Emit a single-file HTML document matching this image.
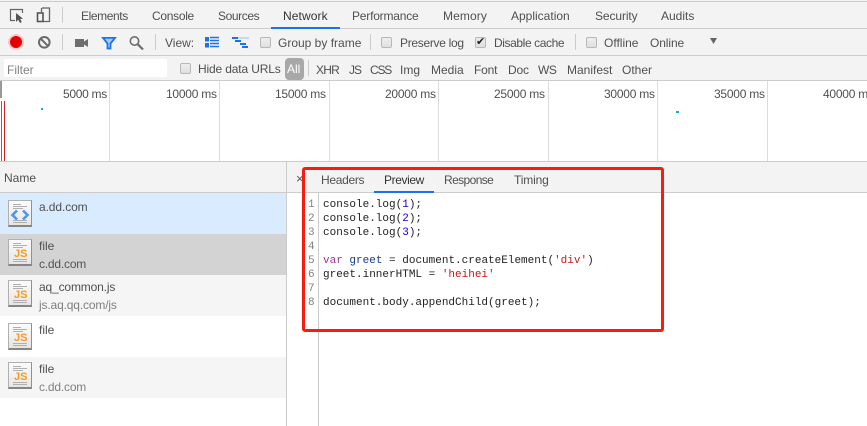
<!DOCTYPE html>
<html><head><meta charset="utf-8"><style>
html,body{margin:0;padding:0;background:#fff}
#r{position:relative;width:867px;height:426px;overflow:hidden;font:12px "Liberation Sans",sans-serif;color:#505050;background:#fff}
#r div,#r span.t{position:absolute}
.t{white-space:nowrap;line-height:14px}
.b{background:#ccc}
.cb{width:9px;height:9px;border:1px solid #b8b8b8;border-radius:2px;background:linear-gradient(#eee,#e0e0e0)}
.fi{width:24px;height:27px;background:linear-gradient(#fbfbfb,#e6e6e6);border:1px solid #b0b0b0;border-right-color:#909090;border-bottom:2px solid #858585;box-sizing:border-box}
.fi i{position:absolute;height:1px;background:#b0b0b0}
.js{position:absolute;left:5px;top:9px;font:bold 11px/11px "Liberation Sans",sans-serif;color:#f59c20}
.m{font:11px/14px "Liberation Mono",monospace;color:#222;white-space:pre}
.n{position:absolute;left:308px;color:#808080;font:11px/14px "Liberation Mono",monospace}
.v{color:#a0309a}
.g{background:#dcdcdc;width:1px;height:80px;top:81px}
</style></head><body><div id="r">
<div style="left:0;top:0;width:867px;height:162px;background:#f3f3f3"></div>
<div class="b" style="left:0;top:1px;width:867px;height:1px"></div>
<div class="b" style="left:0;top:28px;width:867px;height:1px"></div>
<div class="b" style="left:0;top:55px;width:867px;height:1px"></div>
<div class="b" style="left:0;top:80px;width:867px;height:1px"></div>
<div style="left:271px;top:27px;width:69px;height:2px;background:#1a73e8"></div>

<svg style="position:absolute;left:0;top:0" width="260" height="56" fill="none">
<path d="M15 20.500H10.500V9.500H22.500V13" stroke="#666" stroke-width="1.200"/>
<path d="M16 13V22L18.200 19.800L20 23L21.800 22L20.200 19L23 18.800Z" fill="#555"/>
<path d="M43 8H49.500V21.500H43" stroke="#666" stroke-width="1.300"/><path d="M42 8H44" stroke="#666" stroke-width="1.300"/><path d="M41.500 12V8" stroke="#666" stroke-width="1.300"/>
<rect x="37.500" y="13" width="5.500" height="8.500" stroke="#555" stroke-width="1.600"/>
<circle cx="16" cy="42" r="8" fill="#f7caca"/><circle cx="16" cy="42" r="6" fill="#e60000"/>
<circle cx="44.300" cy="42.300" r="5.300" stroke="#6a6a6a" stroke-width="2"/><path d="M40.500 38.500L48.100 46.100" stroke="#6a6a6a" stroke-width="2"/>
<rect x="75" y="39" width="9" height="8" fill="#6e6e6e"/><path d="M84 41.500L88 39V47L84 44.500Z" fill="#6e6e6e"/>
<path d="M103 37.900H115L110.500 43.500V48.500H107.500V43.500Z" fill="#a8cdf6" stroke="#1a73e8" stroke-width="1.800"/>
<circle cx="134.500" cy="41" r="4.200" stroke="#6e6e6e" stroke-width="1.600"/><path d="M137.800 44.300L143 49.500" stroke="#6e6e6e" stroke-width="2.200"/>
<rect x="205" y="37" width="4" height="4.500" fill="#1a73e8"/><rect x="205" y="43" width="4" height="4.500" fill="#1a73e8"/>
<path d="M210 37.500H219M210 40.500H219M210 43.500H219M210 46.500H219" stroke="#1a73e8" stroke-width="1.400"/>
<rect x="232" y="37" width="6" height="2" fill="#1a73e8"/><rect x="238" y="37" width="11" height="2" fill="#c3d9f4"/>
<rect x="235" y="40" width="6" height="2" fill="#1a73e8"/><rect x="240" y="43" width="6" height="2" fill="#1a73e8"/><rect x="242" y="46" width="6" height="2" fill="#1a73e8"/>
</svg>
<div class="b" style="left:62px;top:7px;width:1px;height:16px"></div>
<div class="b" style="left:62px;top:34px;width:1px;height:16px"></div>
<div class="b" style="left:155px;top:34px;width:1px;height:16px"></div>
<div class="b" style="left:370px;top:34px;width:1px;height:16px"></div>
<div class="b" style="left:575px;top:34px;width:1px;height:16px"></div>
<div class="b" style="left:308px;top:60px;width:1px;height:16px"></div>

<span class="t" style="left:81px;top:9px;letter-spacing:-.4px">Elements</span>
<span class="t" style="left:152px;top:9px;letter-spacing:-.3px">Console</span>
<span class="t" style="left:218px;top:9px;letter-spacing:-.4px">Sources</span>
<span class="t" style="left:283px;top:9px;color:#333;letter-spacing:.1px">Network</span>
<span class="t" style="left:352px;top:9px;letter-spacing:-.2px">Performance</span>
<span class="t" style="left:443px;top:9px;letter-spacing:.1px">Memory</span>
<span class="t" style="left:511px;top:9px">Application</span>
<span class="t" style="left:595px;top:9px;letter-spacing:-.1px">Security</span>
<span class="t" style="left:661px;top:9px">Audits</span>

<span class="t" style="left:165px;top:36px">View:</span>
<div class="cb" style="left:260px;top:37px"></div><span class="t" style="left:278px;top:36px">Group by frame</span>
<div class="cb" style="left:381px;top:37px"></div><span class="t" style="left:400px;top:36px;letter-spacing:-.3px">Preserve log</span>
<div class="cb" style="left:475px;top:37px"></div><span class="t" style="left:476px;top:35px;font-size:11px;color:#222">✔</span><span class="t" style="left:494px;top:36px;letter-spacing:-.4px">Disable cache</span>
<div class="cb" style="left:586px;top:37px"></div><span class="t" style="left:604px;top:36px">Offline</span>
<span class="t" style="left:650px;top:36px;letter-spacing:-.1px">Online</span>
<svg style="position:absolute;left:710px;top:38px" width="7" height="6"><path d="M0 0H7L3.500 6Z" fill="#666"/></svg>

<div style="left:4px;top:59px;width:163px;height:18px;background:#fff"></div>
<span class="t" style="left:7px;top:63px;color:#808080">Filter</span>
<div class="cb" style="left:180px;top:63px"></div><span class="t" style="left:198px;top:62px;letter-spacing:-.15px">Hide data URLs</span>
<div style="left:285px;top:58px;width:19px;height:22px;border-radius:4px;background:#a8a8a8"></div>
<span class="t" style="left:287px;top:62px;color:#fff">All</span>
<span class="t" style="left:316px;top:63px;letter-spacing:-.8px">XHR</span>
<span class="t" style="left:349px;top:63px;letter-spacing:-1px">JS</span>
<span class="t" style="left:370px;top:63px;letter-spacing:-1.200px">CSS</span>
<span class="t" style="left:400px;top:63px">Img</span>
<span class="t" style="left:431px;top:63px">Media</span>
<span class="t" style="left:474px;top:63px;letter-spacing:-.2px">Font</span>
<span class="t" style="left:508px;top:63px;letter-spacing:-.2px">Doc</span>
<span class="t" style="left:538px;top:63px;letter-spacing:-.4px">WS</span>
<span class="t" style="left:567px;top:63px">Manifest</span>
<span class="t" style="left:622px;top:63px">Other</span>

<div style="left:0;top:81px;width:867px;height:80px;background:#fff"></div>
<div class="b" style="left:0;top:161px;width:867px;height:1px"></div>
<div class="g" style="left:109px"></div>
<div class="g" style="left:219px"></div>
<div class="g" style="left:329px"></div>
<div class="g" style="left:438px"></div>
<div class="g" style="left:548px"></div>
<div class="g" style="left:657px"></div>
<div class="g" style="left:767px"></div>
<div style="left:0;top:81px;width:2px;height:17px;background:#999"></div>
<div style="left:1px;top:101px;width:1px;height:60px;background:#3b78c8"></div>
<div style="left:4px;top:101px;width:1px;height:60px;background:#d02020"></div>
<div style="left:41px;top:108px;width:2px;height:2px;background:#12a5e8"></div>
<div style="left:676px;top:111px;width:3px;height:2px;background:#12a5e8"></div>
<span class="t" style="left:63px;top:87px;letter-spacing:-.3px">5000 ms</span>
<span class="t" style="left:166px;top:87px;letter-spacing:-.25px">10000 ms</span>
<span class="t" style="left:275px;top:87px;letter-spacing:-.25px">15000 ms</span>
<span class="t" style="left:385px;top:87px;letter-spacing:-.25px">20000 ms</span>
<span class="t" style="left:494px;top:87px;letter-spacing:-.25px">25000 ms</span>
<span class="t" style="left:604px;top:87px;letter-spacing:-.25px">30000 ms</span>
<span class="t" style="left:714px;top:87px;letter-spacing:-.25px">35000 ms</span>
<span class="t" style="left:823px;top:87px;letter-spacing:-.25px">40000 ms</span>

<div style="left:0;top:162px;width:287px;height:31px;background:#f3f3f3"></div>
<div class="b" style="left:0;top:192px;width:867px;height:1px"></div>
<div style="left:287px;top:162px;width:580px;height:30px;background:#f3f3f3"></div>
<span class="t" style="left:4px;top:171px">Name</span>

<div style="left:0;top:193px;width:286px;height:41px;background:#d9ecff"></div>
<div style="left:0;top:234px;width:286px;height:41px;background:#d3d3d3"></div>
<div style="left:0;top:275px;width:286px;height:41px;background:#f5f5f5"></div>
<div style="left:0;top:357px;width:286px;height:41px;background:#f5f5f5"></div>
<div class="b" style="left:286px;top:162px;width:1px;height:264px"></div>
<div class="b" style="left:318px;top:193px;width:1px;height:233px"></div>

<div class="fi" style="left:8px;top:200px"><i style="left:4px;top:3px;width:8px"></i><i style="left:4px;top:5px;width:14px"></i><i style="left:4px;top:7px;width:10px"></i><i style="left:4px;top:19px;width:14px"></i><i style="left:4px;top:21px;width:14px"></i>
<svg style="position:absolute;left:1px;top:8px" width="20" height="12" fill="none" stroke="#4d94f0" stroke-width="2.600"><path d="M7 1.500L2.500 6L7 10.500M13 1.500L17.500 6L13 10.500"/></svg></div>
<div class="fi" style="left:8px;top:239px"><i style="left:4px;top:3px;width:8px"></i><i style="left:4px;top:5px;width:14px"></i><i style="left:4px;top:7px;width:10px"></i><i style="left:4px;top:19px;width:14px"></i><i style="left:4px;top:21px;width:14px"></i><span class="js">JS</span></div>
<div class="fi" style="left:8px;top:280px"><i style="left:4px;top:3px;width:8px"></i><i style="left:4px;top:5px;width:14px"></i><i style="left:4px;top:7px;width:10px"></i><i style="left:4px;top:19px;width:14px"></i><i style="left:4px;top:21px;width:14px"></i><span class="js">JS</span></div>
<div class="fi" style="left:8px;top:323px"><i style="left:4px;top:3px;width:8px"></i><i style="left:4px;top:5px;width:14px"></i><i style="left:4px;top:7px;width:10px"></i><i style="left:4px;top:19px;width:14px"></i><i style="left:4px;top:21px;width:14px"></i><span class="js">JS</span></div>
<div class="fi" style="left:8px;top:362px"><i style="left:4px;top:3px;width:8px"></i><i style="left:4px;top:5px;width:14px"></i><i style="left:4px;top:7px;width:10px"></i><i style="left:4px;top:19px;width:14px"></i><i style="left:4px;top:21px;width:14px"></i><span class="js">JS</span></div>

<span class="t" style="left:39px;top:200px;letter-spacing:-.1px">a.dd.com</span>
<span class="t" style="left:39px;top:239px">file</span>
<span class="t" style="left:39px;top:257px;color:#555;letter-spacing:-.2px">c.dd.com</span>
<span class="t" style="left:39px;top:280px;letter-spacing:-.15px">aq_common.js</span>
<span class="t" style="left:39px;top:298px;color:#808080;letter-spacing:-.15px">js.aq.qq.com/js</span>
<span class="t" style="left:39px;top:323px">file</span>
<span class="t" style="left:39px;top:362px">file</span>
<span class="t" style="left:39px;top:380px;color:#808080;letter-spacing:-.2px">c.dd.com</span>

<span class="t" style="left:296px;top:172px;font-size:13px;color:#555">×</span>
<span class="t" style="left:321px;top:173px;letter-spacing:-.3px">Headers</span>
<span class="t" style="left:384px;top:173px;color:#333;letter-spacing:-.4px">Preview</span>
<span class="t" style="left:444px;top:173px;letter-spacing:-.6px">Response</span>
<span class="t" style="left:514px;top:173px;letter-spacing:-.15px">Timing</span>
<div style="left:374px;top:191px;width:60px;height:2px;background:#1a73e8"></div>

<span class="n" style="top:198px">1</span><span class="n" style="top:212px">2</span><span class="n" style="top:226px">3</span><span class="n" style="top:240px">4</span><span class="n" style="top:254px">5</span><span class="n" style="top:268px">6</span><span class="n" style="top:282px">7</span><span class="n" style="top:296px">8</span>
<span class="t m" style="left:323px;top:198px">console.log(<span style="color:#1c00cf">1</span>);</span>
<span class="t m" style="left:323px;top:212px">console.log(<span style="color:#1c00cf">2</span>);</span>
<span class="t m" style="left:323px;top:226px">console.log(<span style="color:#1c00cf">3</span>);</span>
<span class="t m" style="left:323px;top:254px"><span class="v">var</span> <span style="color:#1a3a8c">greet</span> = document.createElement(<span style="color:#c41a16">'div'</span>)</span>
<span class="t m" style="left:323px;top:268px">greet.innerHTML = <span style="color:#c41a16">'heihei'</span></span>
<span class="t m" style="left:323px;top:296px">document.body.appendChild(greet);</span>

<div style="left:302px;top:167px;width:356px;height:159px;border:3px solid #fb1a10;border-radius:3px"></div>
</div></body></html>
